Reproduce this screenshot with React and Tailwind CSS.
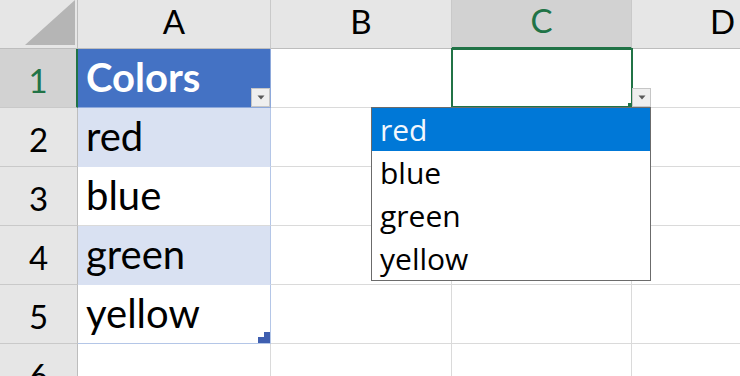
import React from "react";

const CELL_FONT = { fontFamily: "Lato, 'Liberation Sans', sans-serif" };
const LIST_FONT = { fontFamily: "'Open Sans', 'Noto Sans', sans-serif" };

function FilterButton({ className }) {
  return (
    <div
      className={
        "absolute flex h-[19px] w-[19px] items-center justify-center border border-[#c6c6c6] bg-[#efefef] " +
        className
      }
    >
      <svg width="8" height="5" viewBox="0 0 8 5">
        <polygon points="0.5,0.5 7.5,0.5 4,4.5" fill="#595959" />
      </svg>
    </div>
  );
}

function ColHeader({ label, selected }) {
  return (
    <div
      className={
        "flex items-end justify-center border-r border-[#c9c9c9] pb-[10px] text-[33px] leading-[33px] " +
        (selected
          ? "border-b-2 border-b-[#217346] bg-[#d2d2d2] text-[#217346]"
          : "border-b border-b-[#bdbdbd] bg-[#e6e6e6] text-black")
      }
    >
      {label}
    </div>
  );
}

function RowHeader({ n, selected }) {
  return (
    <div
      className={
        "flex items-end justify-center border-b border-b-[#c9c9c9] pb-[10px] text-[33px] leading-[33px] " +
        (selected
          ? "border-r-2 border-r-[#217346] bg-[#d2d2d2] text-[#217346]"
          : "border-r border-r-[#bdbdbd] bg-[#e6e6e6] text-black")
      }
    >
      {n}
    </div>
  );
}

function Cell({ children, className = "" }) {
  return (
    <div
      className={
        "relative flex items-end border-r border-b border-[#dadada] pb-[10px] pl-[8px] text-[40px] leading-[40px] text-black " +
        className
      }
    >
      {children}
    </div>
  );
}

export default function App() {
  const rows = [
    { n: 1, a: "Colors" },
    { n: 2, a: "red", band: true },
    { n: 3, a: "blue" },
    { n: 4, a: "green", band: true },
    { n: 5, a: "yellow", last: true },
    { n: 6, a: "" },
  ];

  return (
    <div className="relative h-[376px] w-[740px] overflow-hidden bg-white" style={CELL_FONT}>
      <div className="grid grid-cols-[78px_193px_181px_180px_108px] grid-rows-[49px_repeat(6,59px)]">
        {/* corner */}
        <div className="relative border-r border-b border-[#bdbdbd] bg-[#e6e6e6]">
          <svg className="absolute left-0 top-0" width="77" height="48" viewBox="0 0 77 48">
            <polygon points="25,45 75,45 75,0" fill="#b5b5b5" />
          </svg>
        </div>
        <ColHeader label="A" />
        <ColHeader label="B" />
        <ColHeader label="C" selected />
        <div className="flex items-end justify-start border-b border-b-[#bdbdbd] bg-[#e6e6e6] pb-[10px] pl-[78px] text-[33px] leading-[33px] text-black">
          D
        </div>

        {rows.map((r) => (
          <React.Fragment key={r.n}>
            <RowHeader n={r.n} selected={r.n === 1} />
            {r.n === 1 ? (
              <Cell className="border-r-[#8ea9db] border-b-[#8ea9db] bg-[#4472c4] font-bold text-white">
                <span className="text-white">Colors</span>
                <FilterButton className="bottom-[0px] right-[0px]" />
              </Cell>
            ) : r.n <= 5 ? (
              <Cell
                className={
                  "border-r-[#b4c6e7] " +
                  (r.band ? "bg-[#d9e1f2] border-b-[#d9e1f2] " : "bg-white ") +
                  (r.last ? "border-b-[#b4c6e7] " : r.band ? "" : "border-b-[#dadada] ")
                }
              >
                {r.a}
                {r.last && (
                  <svg className="absolute bottom-[0px] right-[0px]" width="12" height="11" viewBox="0 0 12 11">
                    <polygon points="12,0 12,11 0,11 0,5 6,5 6,0" fill="#3f5fb0" />
                  </svg>
                )}
              </Cell>
            ) : (
              <Cell />
            )}
            <Cell />
            <Cell className={r.n === 1 ? "border-b-transparent" : ""} />
            <Cell className="border-r-0" />
          </React.Fragment>
        ))}
      </div>

      {/* selection on C1 */}
      <div className="pointer-events-none absolute left-[451px] top-[48px] h-[60px] w-[182px] border-2 border-[#217346]" />
      <div className="absolute left-[628px] top-[103px] h-[6px] w-[6px] bg-[#217346]" />

      {/* data validation button */}
      <FilterButton className="left-[632px] top-[88px]" />

      {/* dropdown list */}
      <div
        className="absolute left-[371px] top-[107px] w-[280px] border border-[#6b6b6b] bg-white text-[30px]"
        style={LIST_FONT}
      >
        {["red", "blue", "green", "yellow"].map((t, i) => (
          <div
            key={t}
            className={
              "h-[43px] pl-[8px] leading-[44px] " +
              (i === 0 ? "bg-[#0078d7] text-[#f2f7fd]" : "text-black")
            }
          >
            {t}
          </div>
        ))}
      </div>
    </div>
  );
}
